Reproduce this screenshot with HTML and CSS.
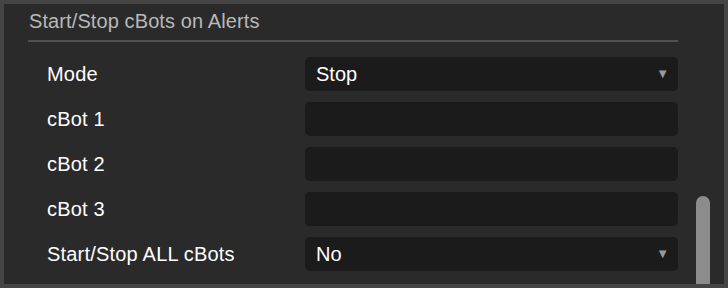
FILE: index.html
```html
<!DOCTYPE html>
<html lang="en">
<head>
    <meta charset="UTF-8">
    <title>Start/Stop cBots on Alerts</title>
    <link rel="stylesheet" href="styles.css">
</head>
<body>
    <div class="frame">
        <div class="panel">
            <div class="content">
                <h3 class="title">Start/Stop cBots on Alerts</h3>
                <div class="rows">
                    <div class="row">
                        <label>Mode</label>
                        <div class="field select">Stop<span class="arrow">&#9660;</span></div>
                    </div>
                    <div class="row">
                        <label>cBot 1</label>
                        <div class="field"></div>
                    </div>
                    <div class="row">
                        <label>cBot 2</label>
                        <div class="field"></div>
                    </div>
                    <div class="row">
                        <label>cBot 3</label>
                        <div class="field"></div>
                    </div>
                    <div class="row">
                        <label>Start/Stop ALL cBots</label>
                        <div class="field select">No<span class="arrow">&#9660;</span></div>
                    </div>
                </div>
            </div>
            <div class="scrollbar"><div class="thumb"></div></div>
        </div>
    </div>
</body>
</html>
```

FILE: styles.css
```css
body { margin: 0; background: #454545; font-family: Arial, "Liberation Sans", sans-serif; }
.frame { width: 728px; height: 288px; padding: 4px; box-sizing: border-box; }
.panel { height: 100%; background: #2a2a2a; display: flex; overflow: hidden; }
.content { flex: 1; padding: 0 0 0 24px; }
.title { margin: 0; height: 38px; line-height: 35px; padding-left: 1px; font-size: 20px; font-weight: normal; letter-spacing: 0.1px; color: #b8b8b8; border-bottom: 2px solid #505050; width: 650px; box-sizing: border-box; }
.rows { padding: 15px 0 0 19px; display: flex; flex-direction: column; gap: 11px; width: 631px; }
.row { display: flex; align-items: center; height: 34px; }
.row label { width: 258px; color: #fff; font-size: 20px; letter-spacing: 0.2px; }
.field { flex: 1; height: 34px; background: #1b1b1b; border-radius: 5px; color: #fff; font-size: 20px; line-height: 34px; padding: 0 9px 0 11px; display: flex; justify-content: space-between; align-items: center; }
.arrow { color: #9a9a9a; font-size: 13px; }
.scrollbar { width: 28px; }
.thumb { width: 14px; margin-top: 192px; height: 120px; background: #8c8c8c; border-radius: 7px 7px 0 0; }
```
